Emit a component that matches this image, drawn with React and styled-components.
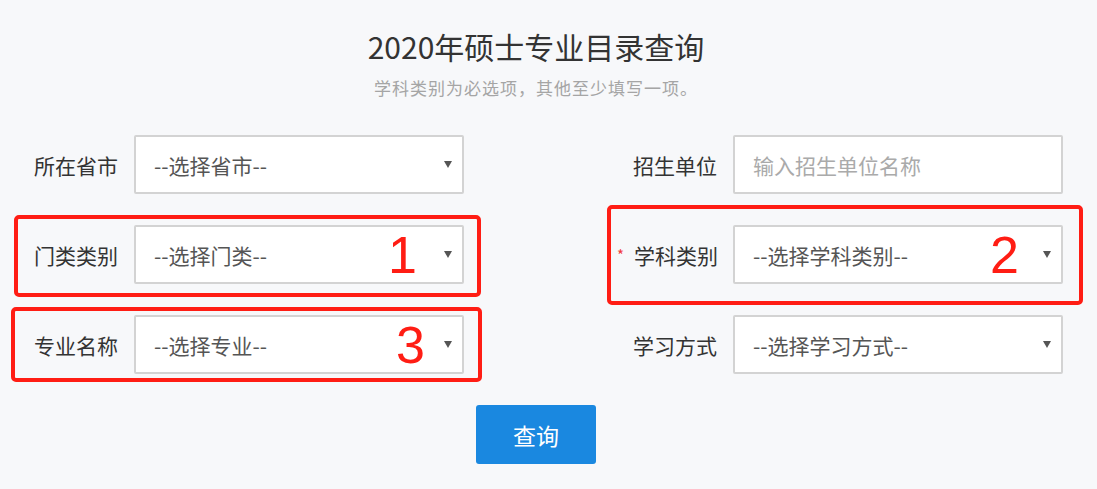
import React from "react";
import styled, { createGlobalStyle } from "styled-components";

const GlobalStyle = createGlobalStyle`
  html, body {
    margin: 0;
    padding: 0;
    background: #f7f8fa;
  }
  body {
    font-family: "Noto Sans CJK SC", "Noto Sans", "Liberation Sans", sans-serif;
    color: #333;
  }
`;

const Page = styled.div`
  width: 1072px;
  min-height: 489px;
  display: flex;
  flex-direction: column;
  align-items: center;
  padding-top: 26px;
  box-sizing: border-box;
`;

const Title = styled.h1`
  margin: 0;
  font-size: 30px;
  font-weight: 400;
  line-height: 40px;
  color: #333;
`;

const Hint = styled.p`
  margin: 10px 0 0;
  font-size: 17px;
  line-height: 24px;
  letter-spacing: 1px;
  color: #a5a5a5;
`;

const Form = styled.form`
  margin-top: 35px;
  display: grid;
  grid-template-columns: 446px 446px;
  column-gap: 153px;
  row-gap: 31px;
  margin-left: 9px;
`;

const Field = styled.div`
  position: relative;
  display: flex;
  align-items: center;
  gap: 16px;
  height: 59px;
`;

const Label = styled.label`
  width: 100px;
  text-align: right;
  font-size: 21px;
  color: #333;
  white-space: nowrap;
`;

const Required = styled.span`
  color: #f03b3b;
  font-size: 15px;
  margin-right: 10px;
  vertical-align: 3px;
`;

const Box = styled.div`
  position: relative;
  width: 330px;
  height: 59px;
  box-sizing: border-box;
  border: 2px solid #d3d3d3;
  border-radius: 2px;
  background: #fff;
  display: flex;
  align-items: center;
  justify-content: space-between;
  padding: 0 10px 0 18px;
  font-size: 21px;
  color: ${(p) => (p.$placeholder ? "#aaa" : "#555")};
`;

const Caret = styled.svg`
  width: 8px;
  height: 7px;
  flex: none;
`;

// red annotation frame around a field, offsets come from props
const Mark = styled.span`
  position: absolute;
  top: ${(p) => p.$t}px;
  right: ${(p) => p.$r}px;
  bottom: ${(p) => p.$b}px;
  left: ${(p) => p.$l}px;
  border: 4px solid #ff1d14;
  border-radius: 5px;
  pointer-events: none;
`;

const Num = styled.span`
  position: absolute;
  right: ${(p) => p.$right}px;
  top: 50%;
  transform: translateY(-50%);
  font-family: "Liberation Sans", "Noto Sans", sans-serif;
  font-size: 52px;
  line-height: 1;
  color: #ff1d14;
`;

const Button = styled.button`
  margin-top: 31px;
  width: 120px;
  height: 59px;
  border: none;
  border-radius: 3px;
  background: #1a88e0;
  color: #fff;
  font-family: inherit;
  font-size: 23px;
  cursor: pointer;
`;

const Select = ({ text, num, numRight }) => (
  <Box>
    <span>{text}</span>
    {num && <Num $right={numRight}>{num}</Num>}
    <Caret viewBox="0 0 8 7">
      <path d="M0 0h8L4 7z" fill="#555" />
    </Caret>
  </Box>
);

export default function App() {
  return (
    <Page>
      <GlobalStyle />
      <Title>2020年硕士专业目录查询</Title>
      <Hint>学科类别为必选项，其他至少填写一项。</Hint>
      <Form>
        <Field>
          <Label>所在省市</Label>
          <Select text="--选择省市--" />
        </Field>
        <Field>
          <Label>招生单位</Label>
          <Box $placeholder>输入招生单位名称</Box>
        </Field>

        <Field>
          <Mark $t={-10} $r={-17} $b={-13} $l={-4} />
          <Label>门类类别</Label>
          <Select text="--选择门类--" num="1" numRight={45} />
        </Field>
        <Field>
          <Mark $t={-20} $r={-20} $b={-21} $l={-10} />
          <Label>
            <Required>*</Required>学科类别
          </Label>
          <Select text="--选择学科类别--" num="2" numRight={42} />
        </Field>

        <Field>
          <Mark $t={-8} $r={-18} $b={-8} $l={-7} />
          <Label>专业名称</Label>
          <Select text="--选择专业--" num="3" numRight={37} />
        </Field>
        <Field>
          <Label>学习方式</Label>
          <Select text="--选择学习方式--" />
        </Field>
      </Form>
      <Button type="button">查询</Button>
    </Page>
  );
}
